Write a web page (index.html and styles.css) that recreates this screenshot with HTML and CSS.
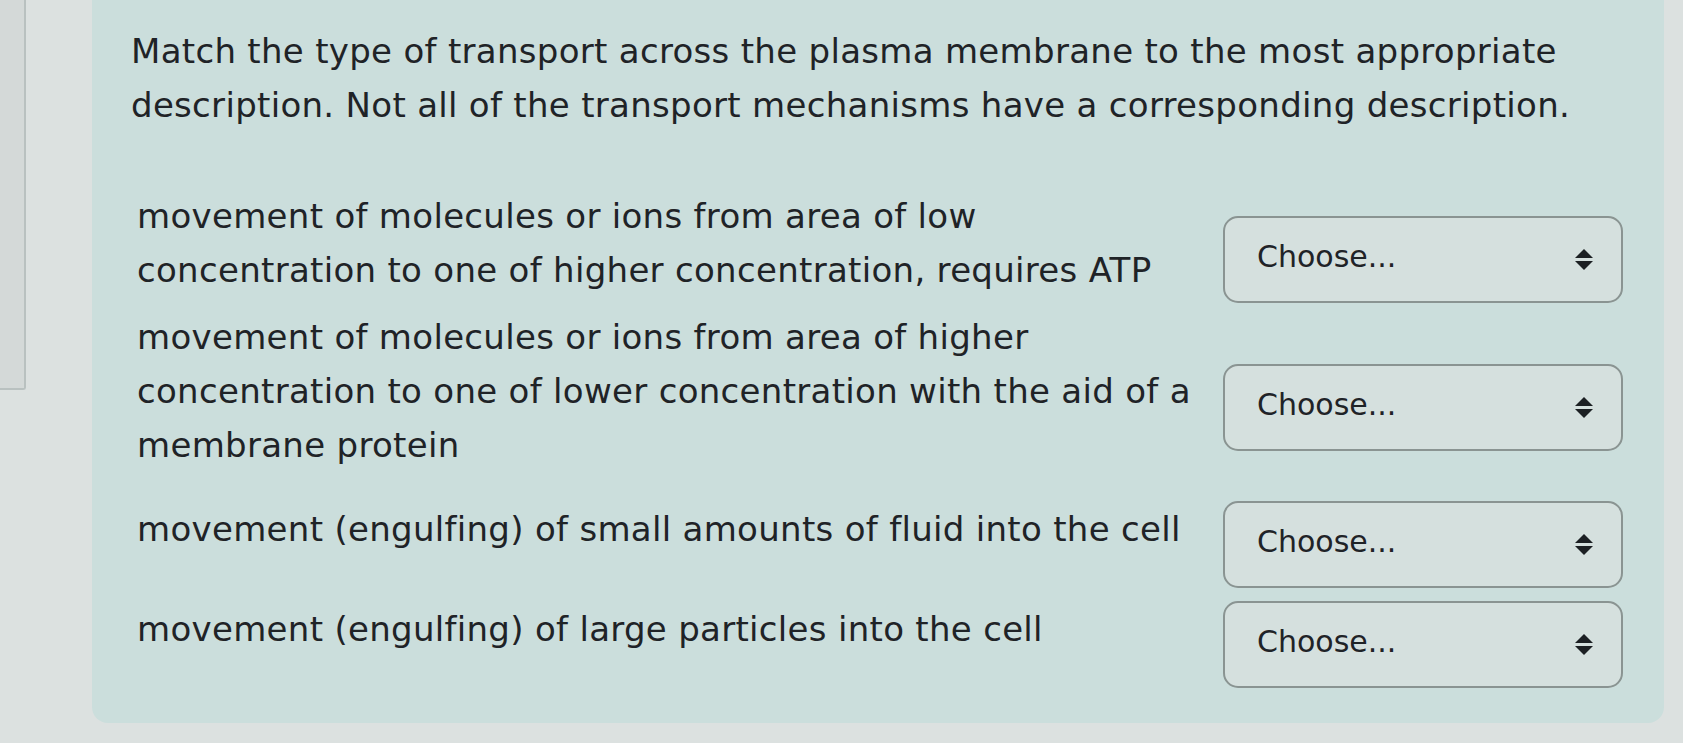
FILE: index.html
```html
<!DOCTYPE html>
<html lang="en">
  <head>
    <meta charset="UTF-8" />
    <meta name="viewport" content="width=device-width, initial-scale=1.0" />
    <title>Transport across the plasma membrane</title>
    <link rel="stylesheet" href="styles.css">
  </head>

  <body>
    <div class="page">
      <div class="gutter">
        <div class="side-box"></div>
      </div>

      <div class="question">
        <p class="prompt">Match the type of transport across the plasma membrane to the most appropriate description. Not all of the transport mechanisms have a corresponding description.</p>

        <div class="pairs">
          <div class="pair">
            <div class="desc">movement of molecules or ions from area of low concentration to one of higher concentration, requires ATP</div>
            <div class="pick">
              <select class="choice">
                <option>Choose...</option>
                <option>active transport</option>
                <option>facilitated diffusion</option>
                <option>pinocytosis</option>
                <option>phagocytosis</option>
              </select>
              <svg class="arrows" width="18" height="21" viewBox="0 0 18 21">
                <polygon points="9,0 18,9 0,9" />
                <polygon points="0,12 18,12 9,21" />
              </svg>
            </div>
          </div>

          <div class="pair">
            <div class="desc">movement of molecules or ions from area of higher concentration to one of lower concentration with the aid of a membrane protein</div>
            <div class="pick">
              <select class="choice">
                <option>Choose...</option>
                <option>active transport</option>
                <option>facilitated diffusion</option>
                <option>pinocytosis</option>
                <option>phagocytosis</option>
              </select>
              <svg class="arrows" width="18" height="21" viewBox="0 0 18 21">
                <polygon points="9,0 18,9 0,9" />
                <polygon points="0,12 18,12 9,21" />
              </svg>
            </div>
          </div>

          <div class="pair">
            <div class="desc">movement (engulfing) of small amounts of fluid into the cell</div>
            <div class="pick">
              <select class="choice">
                <option>Choose...</option>
                <option>active transport</option>
                <option>facilitated diffusion</option>
                <option>pinocytosis</option>
                <option>phagocytosis</option>
              </select>
              <svg class="arrows" width="18" height="21" viewBox="0 0 18 21">
                <polygon points="9,0 18,9 0,9" />
                <polygon points="0,12 18,12 9,21" />
              </svg>
            </div>
          </div>

          <div class="pair">
            <div class="desc">movement (engulfing) of large particles into the cell</div>
            <div class="pick">
              <select class="choice">
                <option>Choose...</option>
                <option>active transport</option>
                <option>facilitated diffusion</option>
                <option>pinocytosis</option>
                <option>phagocytosis</option>
              </select>
              <svg class="arrows" width="18" height="21" viewBox="0 0 18 21">
                <polygon points="9,0 18,9 0,9" />
                <polygon points="0,12 18,12 9,21" />
              </svg>
            </div>
          </div>
        </div>
      </div>
    </div>
  </body>
</html>
```

FILE: styles.css
```css
* {
  margin: 0;
  padding: 0;
  box-sizing: border-box;
}

body {
  background: #dce1e0;
  font-family: "DejaVu Sans", "Liberation Sans", sans-serif;
  color: #1f2327;
}

.page {
  display: flex;
  height: 743px;
  overflow: hidden;
}

/* left strip with the collapsed side panel */
.gutter {
  width: 92px;
  flex-shrink: 0;
}
.side-box {
  width: 26px;
  height: 390px;
  background: #d4d9d8;
  border-right: 2px solid #b9c1c0;
  border-bottom: 2px solid #b9c1c0;
  border-bottom-right-radius: 3px;
}

.question {
  width: 1572px;
  height: 723px;
  flex-shrink: 0;
  background: #cbdedc;
  border-radius: 0 0 16px 16px;
  padding: 24px 0 0 39px;
}

.prompt {
  width: 1500px;
  font-size: 34px;
  line-height: 54px;
  letter-spacing: 0.3px;
}

.pairs {
  margin: 57px 0 0 6px;
  display: flex;
  flex-direction: column;
  gap: 13px;
}

.pair {
  display: grid;
  grid-template-columns: 1068px 400px;
  column-gap: 18px;
  align-items: center;
}

.desc {
  font-size: 34px;
  line-height: 54px;
  letter-spacing: 0.3px;
}

/* select sits a little below the middle of its label */
.pick {
  position: relative;
  height: 87px;
  margin: 16px 0 -16px;
}

.choice {
  appearance: none;
  -webkit-appearance: none;
  width: 100%;
  height: 87px;
  padding: 0 0 6px 32px;
  border: 2px solid #8a9492;
  border-radius: 15px;
  background: #d5e0de;
  font-family: inherit;
  font-size: 30px;
  color: #1f2327;
  outline: none;
}

.arrows {
  position: absolute;
  right: 30px;
  top: 33px;
  fill: #1c2023;
  pointer-events: none;
}
```
